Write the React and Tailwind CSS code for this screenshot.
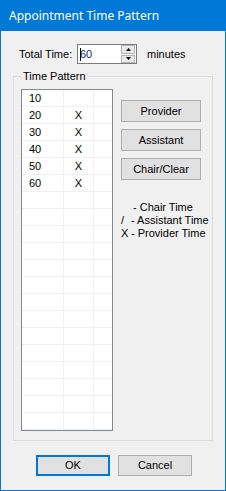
import React from "react";

const rows = [
  ["10", ""],
  ["20", "X"],
  ["30", "X"],
  ["40", "X"],
  ["50", "X"],
  ["60", "X"],
];
const allRows = Array.from({ length: 20 }, (_, i) => rows[i] || ["", ""]);

function Btn({ children, className = "" }) {
  return (
    <div
      className={
        "flex items-center justify-center bg-[#e1e1e1] border border-[#adadad] text-[11px] leading-none text-black " +
        className
      }
    >
      {children}
    </div>
  );
}

export default function App() {
  return (
    <div
      className="w-[226px] h-[491px] flex flex-col bg-[#f0f0f0] overflow-hidden"
      style={{ fontFamily: '"Liberation Sans", Arial, sans-serif' }}
    >
      <div className="h-[31px] shrink-0 bg-[#0078d7] flex items-center pl-[9px] text-white text-[12px]" style={{ fontFamily: '"Noto Sans", "Liberation Sans", sans-serif' }}>
        Appointment Time Pattern
      </div>
      <div className="flex-1 border-x border-b border-[#0078d7] flex flex-col">
        {/* Total time row */}
        <div className="flex items-center pt-[13px] pl-[18px] text-[11px] text-black">
          <div className="w-[58px]">Total Time:</div>
          <div className="w-[60px] h-[20px] border border-[#7a7a7a] bg-white flex items-center">
            <div className="relative flex-1 h-full flex items-center pl-[2px]">
              <span className="text-[#0b2a7a]">60</span>
              <span className="absolute left-[2px] top-[3px] w-[1px] h-[13px] bg-black" />
            </div>
            <div className="w-[14px] h-[18px] mr-[1px] flex flex-col gap-[1px]">
              <div className="flex-1 bg-[#e8e8e8] border border-[#b5b5b5] flex items-center justify-center">
                <svg width="5" height="3" viewBox="0 0 5 3"><path d="M2.5 0 L5 3 L0 3Z" fill="#000" /></svg>
              </div>
              <div className="flex-1 bg-[#e8e8e8] border border-[#b5b5b5] flex items-center justify-center">
                <svg width="5" height="3" viewBox="0 0 5 3"><path d="M0 0 L5 0 L2.5 3Z" fill="#000" /></svg>
              </div>
            </div>
          </div>
          <div className="ml-[10px]">minutes</div>
        </div>

        {/* Group box */}
        <div className="relative ml-[12px] mt-[12px] w-[200px] h-[365px] border border-[#dcdcdc] flex pl-[7px] pt-[12px]">
          <div className="absolute left-[7px] top-[-7px] px-[2px] bg-[#f0f0f0] text-[11px] leading-[13px] text-black">
            Time Pattern
          </div>
          <div className="w-[92px] h-[342px] border border-[#828790] bg-white flex flex-col">
            {allRows.map((r, i) => (
              <div key={i} className="h-[17px] flex border-b border-[#f0f0f0] text-[11px] text-black">
                <div className="w-[42px] border-r border-[#f0f0f0] pl-[7px] flex items-center">{r[0]}</div>
                <div className="w-[30px] border-r border-[#f0f0f0] flex items-center justify-center">{r[1]}</div>
                <div className="flex-1" />
              </div>
            ))}
          </div>
          <div className="ml-[8px] pt-[11px] flex flex-col">
            <Btn className="w-[80px] h-[22px]">Provider</Btn>
            <Btn className="w-[80px] h-[22px] mt-[7px]">Assistant</Btn>
            <Btn className="w-[80px] h-[22px] mt-[7px]">Chair/Clear</Btn>
            <div className="mt-[21px] text-[11px] leading-[13px] text-black">
              <div className="flex"><span className="w-[10px]"></span><span className="pl-[2px]">- Chair Time</span></div>
              <div className="flex"><span className="w-[10px]">/</span><span>- Assistant Time</span></div>
              <div className="flex"><span className="w-[10px]">X</span><span>- Provider Time</span></div>
            </div>
          </div>
        </div>

        {/* Bottom buttons */}
        <div className="flex pl-[35px] mt-[14px] gap-[8px]">
          <Btn className="w-[74px] h-[21px] !border-2 !border-[#0078d7]">OK</Btn>
          <Btn className="w-[74px] h-[21px]">Cancel</Btn>
        </div>
      </div>
    </div>
  );
}
